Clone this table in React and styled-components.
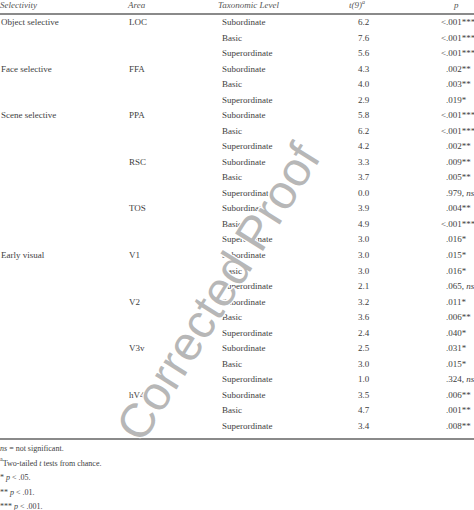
import React from "react";
import styled, { createGlobalStyle } from "styled-components";

const Global = createGlobalStyle`
  html, body { margin: 0; padding: 0; background: #fff; }
  body { width: 474px; height: 510px; overflow: hidden; }
`;

const Page = styled.div`
  position: relative;
  width: 474px;
  height: 510px;
  overflow: hidden;
  font-family: "Liberation Serif", "Times New Roman", serif;
  color: #3e3e3e;
`;

const Table = styled.div`
  display: grid;
  grid-template-columns: 128px 90px 131px 97px 1fr;
  border-bottom: 2px solid #8a8a8a;
  padding-bottom: 4px;
`;

const HeadCell = styled.div`
  height: 13px;
  line-height: 11px;
  font-size: 9px;
  font-style: italic;
  color: #555;
  padding-left: ${(p) => p.$indent || 0}px;
  border-bottom: 2px solid #8a8a8a;
  white-space: nowrap;
`;

const Cell = styled.div`
  height: 15.54px;
  line-height: 15.54px;
  font-size: 9px;
  padding-left: ${(p) => p.$indent || 0}px;
  white-space: nowrap;
`;

const Lt = styled.span`
  margin-left: -5px;
`;

const Sup = styled.sup`
  font-size: 6px;
  vertical-align: top;
  line-height: 6px;
  position: relative;
  top: -1px;
`;

const Foot = styled.div`
  padding-top: 2px;
  font-size: 8px;
  line-height: 14.5px;
  color: #3e3e3e;
`;

const FootLine = styled.div`
  white-space: nowrap;
`;

const Mark = styled.div`
  position: absolute;
  left: 218px;
  top: 292px;
  transform: translate(-50%, -50%) rotate(-58deg);
  font-family: "Liberation Sans", Arial, sans-serif;
  font-size: 48px;
  white-space: nowrap;
  color: rgba(160, 160, 160, 0.75);
  text-shadow: 0 0 1px #fff, 1px 1px 0 #fff, -1px -1px 0 #fff, 1px -1px 0 #fff, -1px 1px 0 #fff;
  pointer-events: none;
`;

const data = [
  ["Object selective", [
    ["LOC", [["Subordinate", "6.2", "<.001***"], ["Basic", "7.6", "<.001***"], ["Superordinate", "5.6", "<.001***"]]],
  ]],
  ["Face selective", [
    ["FFA", [["Subordinate", "4.3", ".002**"], ["Basic", "4.0", ".003**"], ["Superordinate", "2.9", ".019*"]]],
  ]],
  ["Scene selective", [
    ["PPA", [["Subordinate", "5.8", "<.001***"], ["Basic", "6.2", "<.001***"], ["Superordinate", "4.2", ".002**"]]],
    ["RSC", [["Subordinate", "3.3", ".009**"], ["Basic", "3.7", ".005**"], ["Superordinate", "0.0", ".979, ns"]]],
    ["TOS", [["Subordinate", "3.9", ".004**"], ["Basic", "4.9", "<.001***"], ["Superordinate", "3.0", ".016*"]]],
  ]],
  ["Early visual", [
    ["V1", [["Subordinate", "3.0", ".015*"], ["Basic", "3.0", ".016*"], ["Superordinate", "2.1", ".065, ns"]]],
    ["V2", [["Subordinate", "3.2", ".011*"], ["Basic", "3.6", ".006**"], ["Superordinate", "2.4", ".040*"]]],
    ["V3v", [["Subordinate", "2.5", ".031*"], ["Basic", "3.0", ".015*"], ["Superordinate", "1.0", ".324, ns"]]],
    ["hV4", [["Subordinate", "3.5", ".006**"], ["Basic", "4.7", ".001**"], ["Superordinate", "3.4", ".008**"]]],
  ]],
];

function PValue({ v }) {
  let lt = false;
  let s = v;
  if (s.startsWith("<")) { lt = true; s = s.slice(1); }
  const ns = s.endsWith(", ns");
  if (ns) s = s.slice(0, -2);
  return (
    <>
      {lt && <Lt>&lt;</Lt>}
      {s}
      {ns && <i>ns</i>}
    </>
  );
}

export default function App() {
  const rows = [];
  data.forEach(([sel, areas]) => {
    areas.forEach(([area, items], ai) => {
      items.forEach(([lvl, t, p], ri) => {
        const key = `${area}-${ri}`;
        rows.push(
          <React.Fragment key={key}>
            <Cell $indent={1}>{ai === 0 && ri === 0 ? sel : ""}</Cell>
            <Cell $indent={1}>{ri === 0 ? area : ""}</Cell>
            <Cell $indent={4}>{lvl}</Cell>
            <Cell $indent={9}>{t}</Cell>
            <Cell $indent={0}><PValue v={p} /></Cell>
          </React.Fragment>
        );
      });
    });
  });

  return (
    <Page>
      <Global />
      <Table>
        <HeadCell>Selectivity</HeadCell>
        <HeadCell>Area</HeadCell>
        <HeadCell>Taxonomic Level</HeadCell>
        <HeadCell>t(9)<Sup>a</Sup></HeadCell>
        <HeadCell $indent={8}>p</HeadCell>
        {rows}
      </Table>
      <Foot>
        <FootLine><i>ns</i> = not significant.</FootLine>
        <FootLine><Sup>a</Sup>Two-tailed <i>t</i> tests from chance.</FootLine>
        <FootLine>* <i>p</i> &lt; .05.</FootLine>
        <FootLine>** <i>p</i> &lt; .01.</FootLine>
        <FootLine>*** <i>p</i> &lt; .001.</FootLine>
      </Foot>
      <Mark>Corrected Proof</Mark>
    </Page>
  );
}
